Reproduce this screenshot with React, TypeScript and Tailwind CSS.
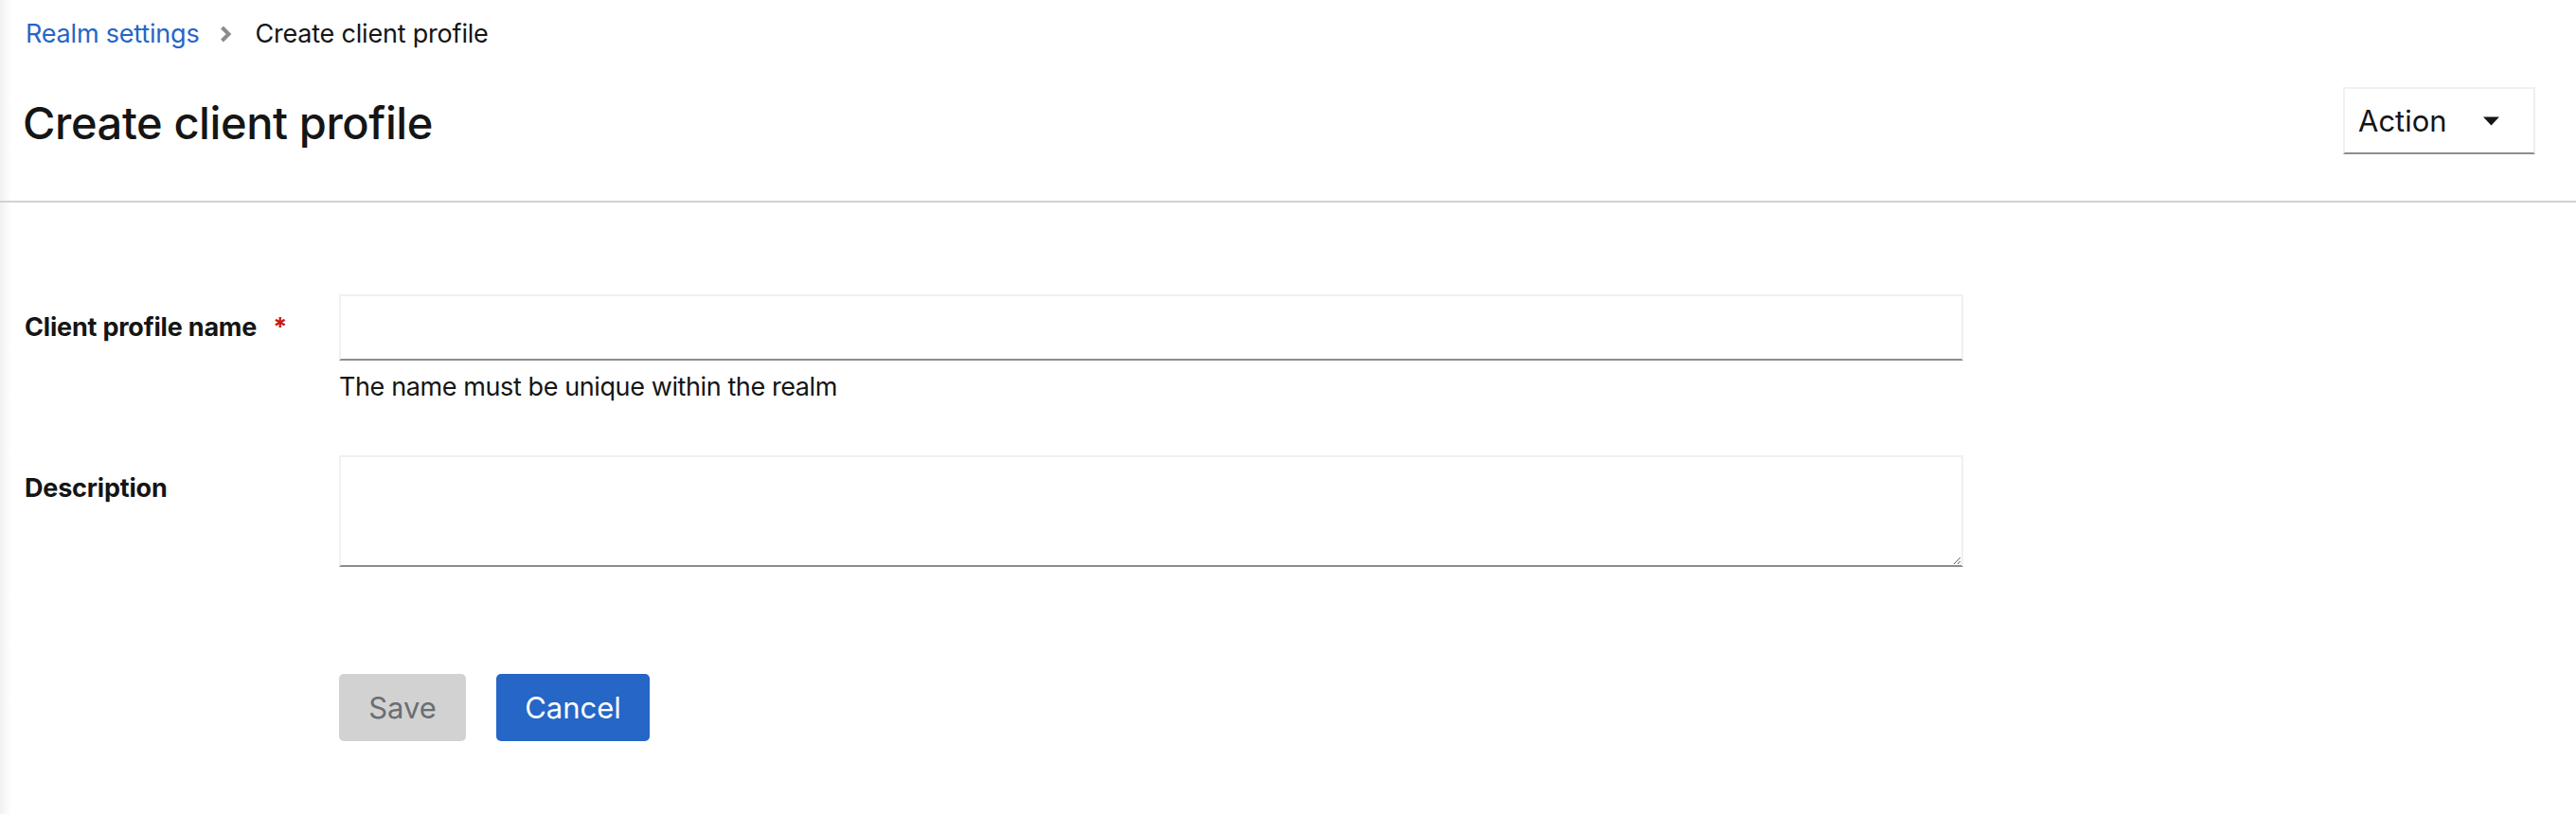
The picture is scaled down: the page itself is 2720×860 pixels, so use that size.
import React from 'react';

const Caret = () => (
  <svg width="17" height="10" viewBox="0 0 17 10" aria-hidden="true">
    <path d="M0 0.5h17L8.5 9.5z" fill="#151515" />
  </svg>
);

const Chevron = () => (
  <svg width="13" height="18" viewBox="0 0 13 18" aria-hidden="true">
    <path d="M2.5 2l7 7-7 7" fill="none" stroke="#8a8d90" strokeWidth="4" strokeLinejoin="miter" />
  </svg>
);

export default function App() {
  return (
    <div className="min-h-screen bg-white bg-[linear-gradient(to_right,#f1f1f1,#ffffff_12px)] font-['Inter',sans-serif] text-[#151515]">
      {/* Header */}
      <section className="pl-[27px] pr-[43px] pt-[16px] pb-[49px] border-b-2 border-[#d2d2d2]">
        <nav className="flex items-center h-[40px] text-[27px] leading-[40px]">
          <a className="text-[#2566c7] tracking-[-0.2px]">Realm settings</a>
          <span className="ml-[22px] mr-[24px] flex items-center">
            <Chevron />
          </span>
          <span className="tracking-[-0.2px]">Create client profile</span>
        </nav>
        <div className="flex items-start justify-between mt-[36px]">
          <h1 className="-ml-[3px] mt-[10px] text-[47px] leading-[56px] font-medium tracking-[-0.4px]">
            Create client profile
          </h1>
          <button className="flex items-center w-[203px] h-[71px] pl-[14px] pr-[36px] justify-between border-2 border-[#f0f0f0] border-b-[#8a8d90] bg-white text-[31px] leading-none">
            <span>Action</span>
            <Caret />
          </button>
        </div>
      </section>

      {/* Form */}
      <form className="pl-[27px] pt-[97px] pb-[77px]">
        <div className="grid grid-cols-[331px_1715px]">
          <label className="-ml-[1px] pt-[15px] text-[27px] leading-[40px] font-bold tracking-[-0.2px]">
            Client profile name
            <span className="ml-[17px] text-[#c9190b]">*</span>
          </label>
          <div>
            <input
              type="text"
              className="block w-full h-[70px] border-2 border-[#f0f0f0] border-b-[#8a8d90] px-[14px] text-[31px] outline-none"
            />
            <p className="mt-[8px] text-[27px] leading-[40px] tracking-[-0.4px]">
              The name must be unique within the realm
            </p>
          </div>

          <label className="-ml-[1px] mt-[52px] pt-[15px] text-[27px] leading-[40px] font-bold tracking-[-0.2px]">
            Description
          </label>
          <div className="mt-[52px]">
            <textarea className="block w-full h-[118px] border-2 border-[#f0f0f0] border-b-[#8a8d90] px-[14px] py-[10px] text-[31px] outline-none resize-y" />
          </div>

          <div />
          <div className="flex gap-[32px] mt-[113px]">
            <button
              type="button"
              disabled
              className="w-[134px] h-[71px] rounded-[5px] bg-[#d2d2d2] text-[#6a6e73] text-[31px] leading-none"
            >
              Save
            </button>
            <button
              type="button"
              className="w-[162px] h-[71px] rounded-[5px] bg-[#2566c7] text-white text-[31px] leading-none"
            >
              Cancel
            </button>
          </div>
        </div>
      </form>
    </div>
  );
}
